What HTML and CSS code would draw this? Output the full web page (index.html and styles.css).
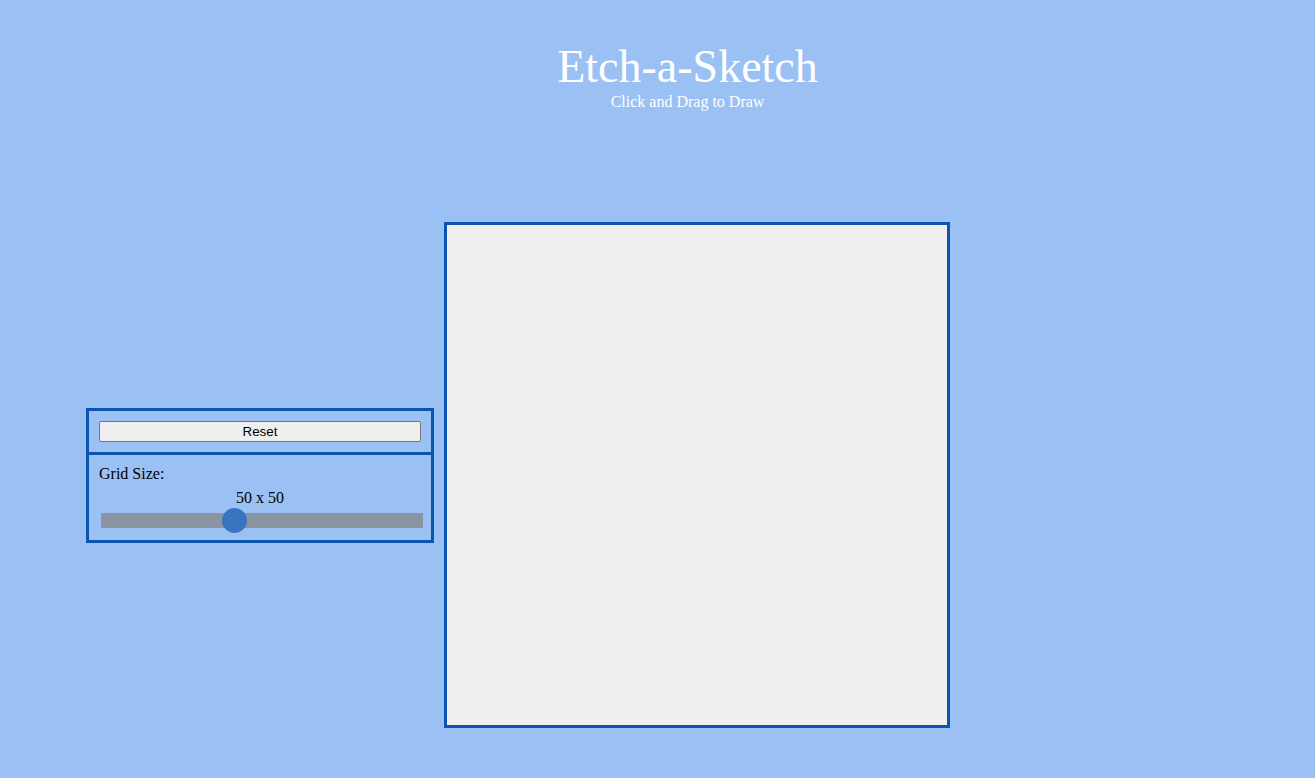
FILE: index.html
```html
<!DOCTYPE html>
<html lang="en">
<head>
<meta charset="utf-8">
<title>Etch-a-Sketch</title>
<link rel="stylesheet" href="styles.css">
</head>
<body>
<header class="header">
  <h1 class="title">Etch-a-Sketch</h1>
  <p class="subtitle">Click and Drag to Draw</p>
</header>
<main class="main">
  <section class="panel">
    <div class="panel-section panel-top">
      <button class="reset-btn" type="button">Reset</button>
    </div>
    <div class="panel-section panel-bottom">
      <div class="label">Grid Size:</div>
      <div class="value">50 x 50</div>
      <input class="slider" type="range" min="2" max="120" value="50">
    </div>
  </section>
  <div class="canvas"></div>
</main>
</body>
</html>
```
FILE: styles.css
```css
html, body {
  margin: 0;
  padding: 0;
}
body {
  background: #9bc1f4;
  font-family: "Liberation Serif", "Times New Roman", serif;
  font-size: 16px;
  color: #000;
  min-height: 778px;
}
.header {
  padding-top: 40px;
  padding-left: 60px;
  text-align: center;
  color: #ffffff;
}
.title {
  margin: 0;
  font-size: 46px;
  font-weight: normal;
  line-height: normal;
}
.subtitle {
  margin: 0;
  font-size: 16px;
  line-height: normal;
}
.main {
  display: flex;
  align-items: center;
  gap: 10px;
  padding-left: 86px;
  margin-top: 111px;
}
.panel {
  width: 342px;
  border: 3px solid #0b55b0;
}
.panel-section {
  padding: 10px;
}
.panel-top {
  border-bottom: 3px solid #0b55b0;
}
.panel-bottom {
  padding: 10px 10px 7px;
}
.reset-btn {
  display: block;
  width: 100%;
  font-family: "Liberation Sans", Arial, sans-serif;
  font-size: 13.33px;
  color: #000;
  background: #efefef;
  border: 1px solid #767676;
  border-radius: 2px;
  padding: 1px 6px;
  height: 21px;
}
.label {
  line-height: normal;
}
.value {
  text-align: center;
  margin-top: 6px;
  line-height: normal;
}
.slider {
  -webkit-appearance: none;
  appearance: none;
  display: block;
  width: 100%;
  height: 25px;
  margin: 1px 0 0 2px;
  background: transparent;
}
.slider::-webkit-slider-runnable-track {
  height: 15px;
  background: #8a94a3;
  border: none;
}
.slider::-webkit-slider-thumb {
  -webkit-appearance: none;
  appearance: none;
  width: 25px;
  height: 25px;
  margin-top: -5px;
  border-radius: 50%;
  background: #3a74c0;
  border: none;
}
.canvas {
  width: 500px;
  height: 500px;
  background: #f0eeee;
  border: 3px solid #0b55b0;
}
```
